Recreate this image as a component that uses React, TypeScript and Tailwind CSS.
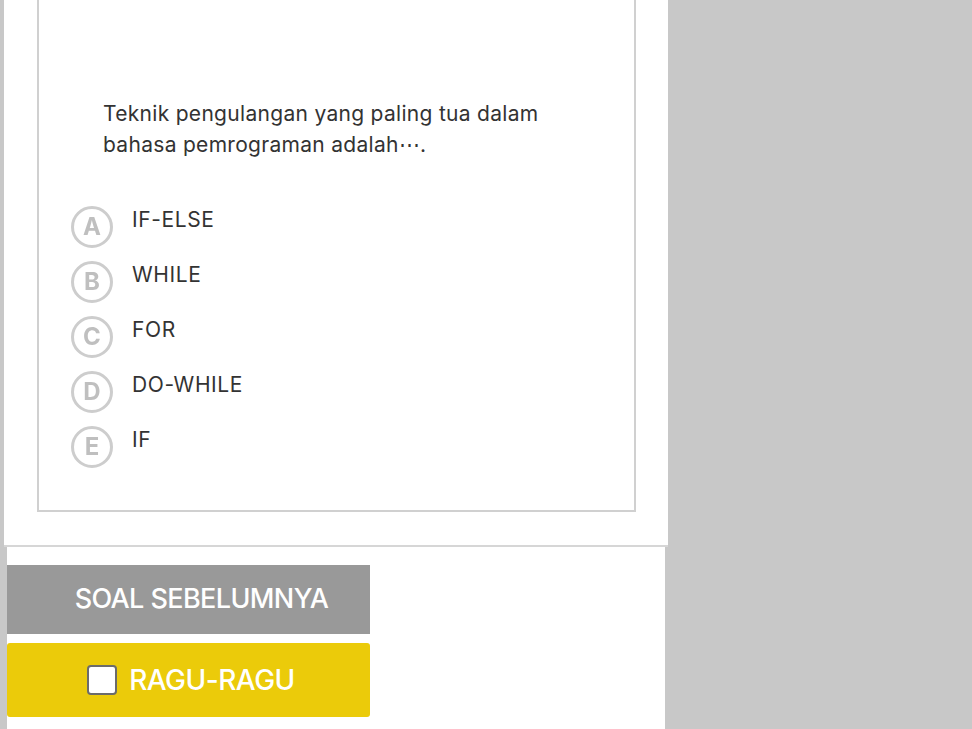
import React from "react";

const options = [
  { k: "A", t: "IF-ELSE" },
  { k: "B", t: "WHILE" },
  { k: "C", t: "FOR" },
  { k: "D", t: "DO-WHILE" },
  { k: "E", t: "IF" },
];

export default function App() {
  return (
    <div
      className="w-[972px] h-[729px] bg-[#c8c8c8] overflow-hidden flex"
      style={{ fontFamily: "Inter, 'Noto Sans', sans-serif" }}
    >
      <div className="flex flex-col w-[668px]">
        <div className="ml-[4px] w-[664px] h-[547px] bg-white border-b-2 border-[#d6d6d6] shrink-0">
          <div className="ml-[33px] w-[599px] h-[512px] border-2 border-t-0 border-[#d0d0d0] flex flex-col">
            <p className="pl-[64px] pt-[98px] text-[21px] leading-[31px] text-[#333333] tracking-[0.3px]">
              Teknik pengulangan yang paling tua dalam
              <br />
              bahasa pemrograman adalah⋯.
            </p>
            <div className="mt-[45px] ml-[32px] flex flex-col">
              {options.map((o) => (
                <div key={o.k} className="h-[55px] flex items-start gap-[19px]">
                  <div className="mt-[1px] w-[42px] h-[42px] rounded-full border-[3px] border-[#cdcdcd] flex items-center justify-center text-[#bfbfbf] text-[24px] font-bold blur-[0.4px]">
                    {o.k}
                  </div>
                  <span className="text-[21px] leading-[30px] text-[#333333] tracking-[0.6px]">
                    {o.t}
                  </span>
                </div>
              ))}
            </div>
          </div>
        </div>
        <div className="ml-[7px] w-[658px] flex-1 bg-white pt-[18px] flex flex-col gap-[9px]">
          <button className="w-[363px] h-[69px] bg-[#999999] text-white text-[27px] font-medium tracking-[-0.6px] pl-[26px] flex items-center justify-center">
            SOAL SEBELUMNYA
          </button>
          <button className="w-[363px] h-[74px] bg-[#ebcb0a] rounded-[3px] text-white text-[28px] font-medium tracking-[-0.5px] pl-[5px] flex items-center justify-center gap-[12px]">
            <span className="w-[30px] h-[30px] bg-white border-2 border-[#6b6b6b] rounded-[4px]"></span>
            RAGU-RAGU
          </button>
        </div>
      </div>
    </div>
  );
}
